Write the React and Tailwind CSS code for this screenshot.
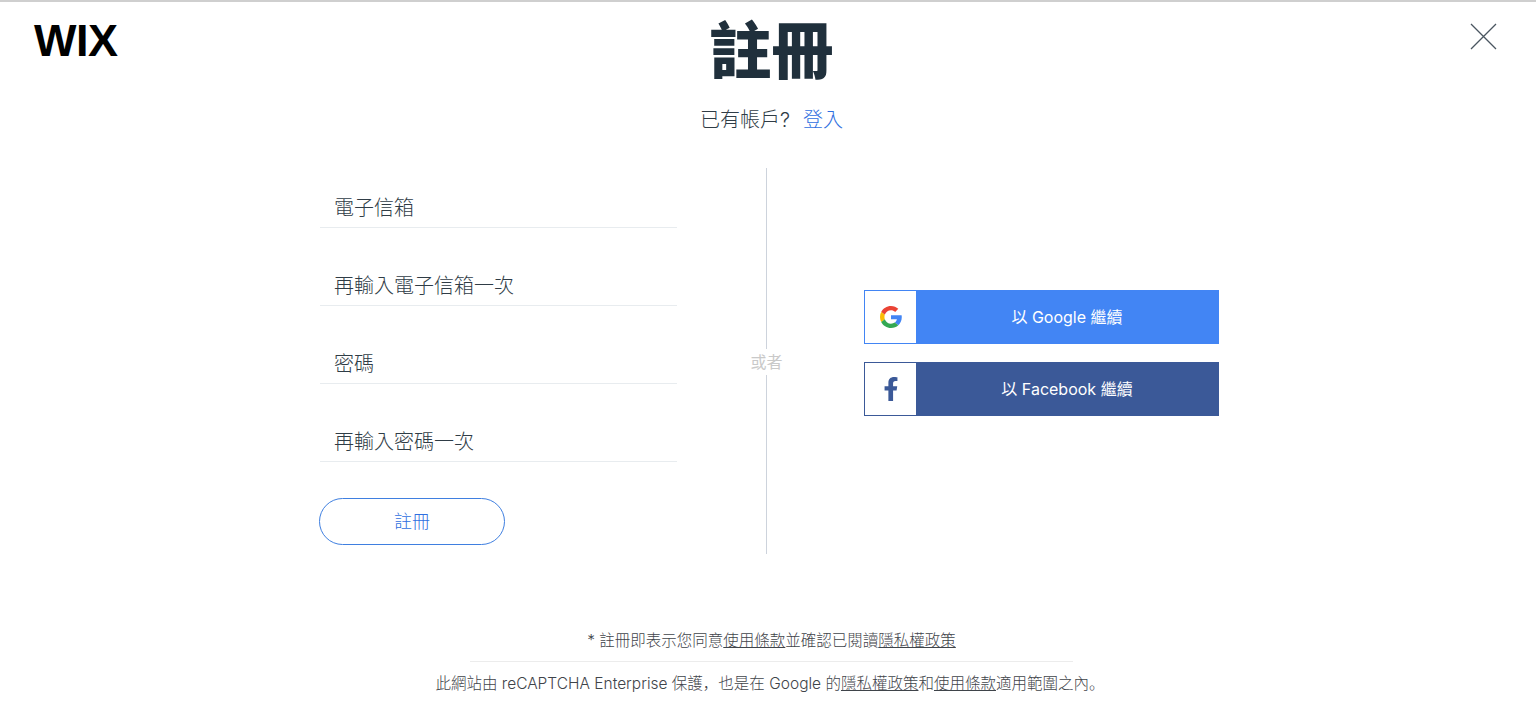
import { FaFacebookF } from 'react-icons/fa'

const cjk = "font-['Inter','Noto_Sans_CJK_TC',sans-serif]"

function Field({ label }) {
  return (
    <div className="h-[39px] border-b border-[#e8ecef] pl-[14px] text-[20px] font-light leading-[39px] text-[#2f3c46]">
      {label}
    </div>
  )
}

function GoogleIcon() {
  return (
    <svg width="22" height="22" viewBox="0 0 48 48">
      <path fill="#EA4335" d="M24 9.500c3.500 0 6.700 1.300 9.100 3.500l6.800-6.800C35.800 2.400 30.300 0 24 0 14.600 0 6.500 5.400 2.600 13.200l7.900 6.100C12.400 13.600 17.700 9.500 24 9.500z" />
      <path fill="#4285F4" d="M47.500 24.500c0-1.600-.1-3.100-.4-4.500H24v9h12.900c-.6 3-2.200 5.500-4.700 7.200l7.700 6c4.500-4.200 7.600-10.300 7.600-17.700z" />
      <path fill="#FBBC05" d="M10.500 28.700c-.5-1.400-.8-3-.8-4.700s.3-3.300.8-4.700l-7.900-6.100C.9 16.500 0 20.100 0 24s.9 7.500 2.600 10.800l7.900-6.100z" />
      <path fill="#34A853" d="M24 48c6.500 0 11.900-2.100 15.900-5.800l-7.700-6c-2.200 1.500-4.900 2.300-8.200 2.300-6.300 0-11.600-4.100-13.500-9.800l-7.900 6.100C6.500 42.600 14.600 48 24 48z" />
    </svg>
  )
}

function SocialButton({ icon, label, bg, border }) {
  return (
    <button className={`flex h-[54px] w-[355px] border ${border} ${bg}`}>
      <span className="flex h-full w-[51px] shrink-0 items-center justify-center bg-white">{icon}</span>
      <span className="flex-1 self-center text-center text-[16px] text-white">{label}</span>
    </button>
  )
}

export default function App() {
  return (
    <div className={`relative h-[712px] w-full overflow-hidden border-t-2 border-[#cfcfcf] bg-white ${cjk}`}>
      {/* Header */}
      <div className="grid h-[166px] grid-cols-[1fr_auto_1fr] items-start">
        <div className="pl-[34px] pt-[14px] font-['Liberation_Sans',sans-serif] text-[45px] font-bold leading-[50px] tracking-[-0.5px] text-black">
          WIX
        </div>
        <div className="flex flex-col items-center pl-[7px]">
          <h1 className="mt-[6px] font-['Noto_Sans_CJK_TC',sans-serif] text-[62px] font-black leading-[78px] text-[#20303c]">註冊</h1>
          <p className="mt-[19px] text-[20px] font-light leading-[30px] text-[#2f3c46]">
            已有帳戶?<a className="ml-[13px] text-[#2f6fe0]">登入</a>
          </p>
        </div>
        <div className="justify-self-end pr-[39px] pt-[21px]">
          <svg width="27" height="27" viewBox="0 0 27 27" fill="none" stroke="#4a5660" strokeWidth="1.300">
            <path d="M1 1l25 25M26 1L1 26" />
          </svg>
        </div>
      </div>

      {/* Form + social */}
      <div className="flex h-[386px] pl-[319px]">
        <div className="flex w-[358px] flex-col pt-[21px]">
          <div className="flex flex-col gap-[39px] pl-[1px]">
            <Field label="電子信箱" />
            <Field label="再輸入電子信箱一次" />
            <Field label="密碼" />
            <Field label="再輸入密碼一次" />
          </div>
          <button className="mt-[36px] h-[47px] w-[186px] rounded-full border border-[#3f7fe0] text-[18px] font-light text-[#2f6fe0]">
            註冊
          </button>
        </div>

        <div className="relative ml-[89px] w-px bg-[#cdd3dc]">
          <span className="absolute left-1/2 top-[181px] -translate-x-1/2 whitespace-nowrap bg-white text-[16px] leading-[26px] text-[#c9c9c9]">
            或者
          </span>
        </div>

        <div className="ml-[97px] flex flex-col gap-[18px] pt-[122px]">
          <SocialButton icon={<GoogleIcon />} label="以 Google 繼續" bg="bg-[#4285f4]" border="border-[#4285f4]" />
          <SocialButton icon={<FaFacebookF className="text-[24px] text-[#3b5998]" />} label="以 Facebook 繼續" bg="bg-[#3b5998]" border="border-[#3b5998]" />
        </div>
      </div>

      {/* Footer */}
      <div className="mt-[75px] flex flex-col items-center font-['Inter','Noto_Sans_CJK_SC',sans-serif] text-[15.5px] font-light text-[#3f444a]">
        <p className="pl-[7px] leading-[24px]">
          * 註冊即表示您同意<u>使用條款</u>並確認已閱讀<u>隱私權政策</u>
        </p>
        <div className="ml-[7px] mt-[8px] h-px w-[603px] bg-[#ececec]" />
        <p className="mt-[10px] pl-[4px] leading-[24px]">
          此網站由 reCAPTCHA Enterprise 保護，也是在 Google 的<u>隱私權政策</u>和<u>使用條款</u>適用範圍之內。
        </p>
      </div>
    </div>
  )
}
